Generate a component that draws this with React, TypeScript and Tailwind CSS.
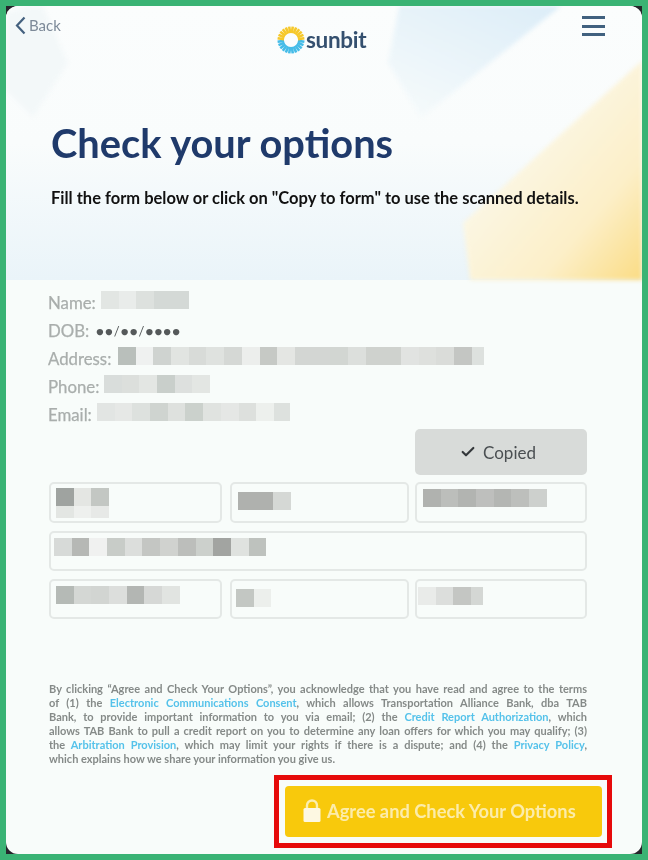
import React from 'react';
import { Check } from 'lucide-react';

// one row of blur squares, every entry is a full class string
const Blocks: React.FC<{ cells: string[] }> = ({ cells }) => (
  <div className="flex h-[18px]">
    {cells.map((c, i) => (
      <div key={i} className={`h-full w-[17.7px] ${c}`} />
    ))}
  </div>
);

const InfoRow: React.FC<{ label: string; labelWidth: string; children: React.ReactNode }> = ({
  label,
  labelWidth,
  children,
}) => (
  <div className="flex h-[28px] items-center">
    <span className={`text-[16.8px] leading-none text-[#a9aeac] blur-[0.3px] [-webkit-text-stroke:0.25px_#a9aeac] ${labelWidth}`}>
      {label}
    </span>
    <div className="mb-[6px]">{children}</div>
  </div>
);

const Field: React.FC<{ className: string; children: React.ReactNode }> = ({ className, children }) => (
  <div className={`rounded-[5px] border-2 border-[#e4e8e6] ${className}`}>{children}</div>
);

const LegalLine: React.FC<{ children: React.ReactNode }> = ({ children }) => (
  <div className="text-justify [text-align-last:justify]">{children}</div>
);

const SunLogo = () => {
  const rays = Array.from({ length: 24 }, (_, i) => (i * 360) / 24 + 7.5);
  return (
    <svg width="28" height="28" viewBox="0 0 28 28" className="blur-[0.3px]">
      {rays.map((a) => {
        const r = (a * Math.PI) / 180;
        const top = Math.sin(r) < 0;
        return (
          <line
            key={a}
            x1={14 + 7 * Math.cos(r)}
            y1={14 + 7 * Math.sin(r)}
            x2={14 + 13.5 * Math.cos(r)}
            y2={14 + 13.5 * Math.sin(r)}
            stroke={top ? '#f6c82a' : '#45bce8'}
            strokeWidth="2.6"
          />
        );
      })}
    </svg>
  );
};

export default function App() {
  return (
    <div className="h-[860px] w-[648px] bg-[#3ab374] p-[6px] font-['Lato','Noto_Sans',sans-serif]">
      <div className="h-[848px] bg-[#26262b]">
        <div className="flex h-full flex-col overflow-hidden rounded-[12px] bg-[#f8fcfa]">
          {/* header with background art */}
          <div className="relative h-[274px] shrink-0 bg-gradient-to-b from-[#fbfdfd] via-[#f9fcfc] to-[#eaf4f9]">
            <svg className="absolute inset-0 blur-[2px]" width="636" height="274" viewBox="0 0 636 274">
              <defs>
                <linearGradient id="blue" x1="0.9" y1="0" x2="0.2" y2="1">
                  <stop offset="0" stopColor="#dcedf8" />
                  <stop offset="1" stopColor="#f5fafb" />
                </linearGradient>
                <linearGradient id="yellow" x1="0.2" y1="0.2" x2="0.95" y2="1">
                  <stop offset="0" stopColor="#fbfaf1" />
                  <stop offset="0.65" stopColor="#fcefc8" />
                  <stop offset="1" stopColor="#fbdc84" />
                </linearGradient>
              </defs>
              <polygon points="394,-4 560,-4 415,112 382,57" fill="url(#blue)" />
              <polygon points="640,51 457,217 465,280 640,280" fill="url(#yellow)" />
              <polygon points="-4,8 35,-4 62,57 27,111 -4,80" fill="#f3f8f9" />
            </svg>

            <div className="relative">
              <div className="flex h-[62px]">
                <div className="flex h-[38px] w-[271px] items-center pl-[9px] blur-[0.3px]">
                  <svg width="11" height="19" viewBox="0 0 11 19" fill="none">
                    <path d="M9.5 1.5 2 9.5l7.5 8" stroke="#44617f" strokeWidth="2.2" />
                  </svg>
                  <span className="ml-[3px] text-[15px] leading-none text-[#7d8a99]">Back</span>
                </div>
                <div className="flex h-[62px] w-[95px] items-center pt-[6px]">
                  <SunLogo />
                  <span className="ml-[1px] text-[22.5px] font-bold leading-none tracking-[-0.3px] text-[#35506f] blur-[0.3px]">
                    sunbit
                  </span>
                </div>
                <div className="ml-[210px] mt-[10px] flex h-[20px] w-[23px] flex-col justify-between">
                  <div className="h-[3px] bg-[#41617f]" />
                  <div className="h-[3px] bg-[#41617f]" />
                  <div className="h-[3px] bg-[#41617f]" />
                </div>
              </div>

              <h1 className="ml-[45px] mt-[49px] text-[39.8px] font-bold leading-[52px] text-[#1f3a6b] blur-[0.3px]">
                Check your options
              </h1>
              <p className="ml-[45px] mt-[19px] text-[16.5px] font-bold leading-[20px] text-[#111111] blur-[0.3px]">
                Fill the form below or click on "Copy to form" to use the scanned details.
              </p>
            </div>
          </div>

          {/* scanned details */}
          <div className="flex-1 pl-[42px] pr-[55px] pt-[9px]">
            <InfoRow label="Name:" labelWidth="w-[53px]">
              <Blocks
                cells={['bg-[#e2e6e3]', 'bg-[#e9ecea]', 'bg-[#dde1de]', 'bg-[#d4d9d6]', 'bg-[#d4d9d6]']}
              />
            </InfoRow>
            <InfoRow label="DOB:" labelWidth="w-[48px]">
              <span className="relative top-[3px] block text-[13px] leading-none tracking-[1.1px] text-[#55595a] blur-[0.3px]">
                ●●/●●/●●●●
              </span>
            </InfoRow>
            <InfoRow label="Address:" labelWidth="w-[70px]">
              <Blocks
                cells={[
                  'bg-[#b9bfbb]', 'bg-[#eff1f0]', 'bg-[#cfd3d0]', 'bg-[#e1e4e1]', 'bg-[#d8dbd8]',
                  'bg-[#dfe2df]', 'bg-[#d5d8d5]', 'bg-[#eceeec]', 'bg-[#c6c9c5]', 'bg-[#e4e6e3]',
                  'bg-[#d3d6d3]', 'bg-[#d3d6d3]', 'bg-[#d2d6d2]', 'bg-[#dcdfdc]', 'bg-[#cfd2ce]',
                  'bg-[#cfd2ce]', 'bg-[#e1e3e1]', 'bg-[#dee0dd]', 'bg-[#dadcd9]', 'bg-[#c4c6c3]',
                  'bg-[#dde1de] !w-[12px]',
                ]}
              />
            </InfoRow>
            <InfoRow label="Phone:" labelWidth="w-[56px]">
              <Blocks
                cells={['bg-[#d9dddb]', 'bg-[#dcdfdc]', 'bg-[#e3e6e3]', 'bg-[#c9cfcb]', 'bg-[#dde0de]', 'bg-[#e3e6e3]']}
              />
            </InfoRow>
            <InfoRow label="Email:" labelWidth="w-[49px]">
              <Blocks
                cells={[
                  'bg-[#e2e5e3]', 'bg-[#e6e8e6]', 'bg-[#dde1de]', 'bg-[#cfd4d0]', 'bg-[#dee1de]',
                  'bg-[#cbd1cc]', 'bg-[#e0e3e0]', 'bg-[#e5e7e5]', 'bg-[#dde0dd]', 'bg-[#edf0ed]',
                  'bg-[#dde1de] !w-[16px]',
                ]}
              />
            </InfoRow>

            <div className="flex justify-end">
              <div className="flex h-[46px] w-[172px] items-center justify-center rounded-[5px] bg-[#d8dbd9] pr-[6px] text-[#4a4f52]">
                <Check size={16} strokeWidth={3.2} className="text-[#33373a]" />
                <span className="ml-[7px] text-[17px] leading-none blur-[0.3px]">Copied</span>
              </div>
            </div>

            {/* form fields */}
            <div className="ml-[1px] mt-[7px] flex">
              <Field className="h-[41px] w-[173px] pl-[5px] pt-[4px]">
                <Blocks cells={['bg-[#9fa3a0]', 'bg-[#e4e6e3]', 'bg-[#c3c7c3]']} />
                <div className="h-[12px] overflow-hidden">
                  <Blocks cells={['bg-[#e3e6e3]', 'bg-[#eef0ee]', 'bg-[#e7e9e7]']} />
                </div>
              </Field>
              <Field className="ml-[8px] h-[41px] w-[179px] pl-[6px] pt-[8px]">
                <Blocks cells={['bg-[#afb1ae]', 'bg-[#afb1ae]', 'bg-[#d5d8d5]']} />
              </Field>
              <Field className="ml-[6px] h-[41px] w-[172px] pl-[6px] pt-[5px]">
                <Blocks
                  cells={['bg-[#b0b2af]', 'bg-[#bcbebb]', 'bg-[#b2b4b1]', 'bg-[#bebfbd]', 'bg-[#b4b6b3]', 'bg-[#bdbfbc]', 'bg-[#cdd0cd]']}
                />
              </Field>
            </div>
            <div className="ml-[1px] mt-[8px]">
              <Field className="h-[40px] pl-[3px] pt-[5px]">
                <Blocks
                  cells={[
                    'bg-[#d7dad8]', 'bg-[#b6b8b5]', 'bg-[#f0f1f0]', 'bg-[#c8ccc8]', 'bg-[#dcdedc]', 'bg-[#c4c6c3]',
                    'bg-[#d0d2cf]', 'bg-[#bcbebb]', 'bg-[#ccd0cc]', 'bg-[#a2a4a1]', 'bg-[#dfe2df]', 'bg-[#bec2be]',
                  ]}
                />
              </Field>
            </div>
            <div className="ml-[1px] mt-[8px] flex">
              <Field className="h-[40px] w-[173px] pl-[5px] pt-[5px]">
                <Blocks
                  cells={['bg-[#b5bab6]', 'bg-[#d4d7d4]', 'bg-[#d2d5d2]', 'bg-[#dcdedc]', 'bg-[#b3b6b3]', 'bg-[#d6d8d6]', 'bg-[#e1e4e1]']}
                />
              </Field>
              <Field className="ml-[8px] h-[40px] w-[179px] pl-[4px] pt-[8px]">
                <Blocks cells={['bg-[#c3c7c3]', 'bg-[#ecefec]']} />
              </Field>
              <Field className="ml-[6px] h-[40px] w-[172px] pl-[1px] pt-[6px]">
                <Blocks cells={['bg-[#e9ebe9]', 'bg-[#dcdedc]', 'bg-[#c4c6c3]', 'bg-[#d4d7d4] !w-[12px]']} />
              </Field>
            </div>

            {/* legal text */}
            <div className="ml-[1px] mt-[63px] text-[11px] font-bold leading-[14px] text-[#858a88] blur-[0.4px]">
              <LegalLine>By clicking “Agree and Check Your Options”, you acknowledge that you have read and agree to the terms</LegalLine>
              <LegalLine>
                of (1) the <span className="text-[#55c2ea]">Electronic Communications Consent</span>, which allows Transportation Alliance Bank, dba TAB
              </LegalLine>
              <LegalLine>
                Bank, to provide important information to you via email; (2) the <span className="text-[#55c2ea]">Credit Report Authorization</span>, which
              </LegalLine>
              <LegalLine>allows TAB Bank to pull a credit report on you to determine any loan offers for which you may qualify; (3)</LegalLine>
              <LegalLine>
                the <span className="text-[#55c2ea]">Arbitration Provision</span>, which may limit your rights if there is a dispute; and (4) the <span className="text-[#55c2ea]">Privacy Policy</span>,
              </LegalLine>
              <div>which explains how we share your information you give us.</div>
            </div>

            <div className="mr-[-25px] mt-[9px] flex justify-end">
              <div className="h-[73px] w-[338px] border-[5px] border-[#e60a0a] px-[6px] py-[6px]">
                <button className="flex h-[51px] w-[317px] items-center rounded-[4px] bg-[#f8c90c] pl-[18px] text-[#fcecaa]">
                  <svg width="18" height="23" viewBox="0 0 18 23" className="mb-[2px] blur-[0.3px]">
                    <path d="M4 10V6.5a5 5 0 0 1 10 0V10" fill="none" stroke="#fbeeb0" strokeWidth="2.4" />
                    <rect x="0.5" y="9" width="17" height="14" rx="1.5" fill="#fdf8e2" />
                  </svg>
                  <span className="ml-[6px] text-[18.3px] font-bold leading-none blur-[0.4px]">Agree and Check Your Options</span>
                </button>
              </div>
            </div>
          </div>
        </div>
      </div>
    </div>
  );
}
